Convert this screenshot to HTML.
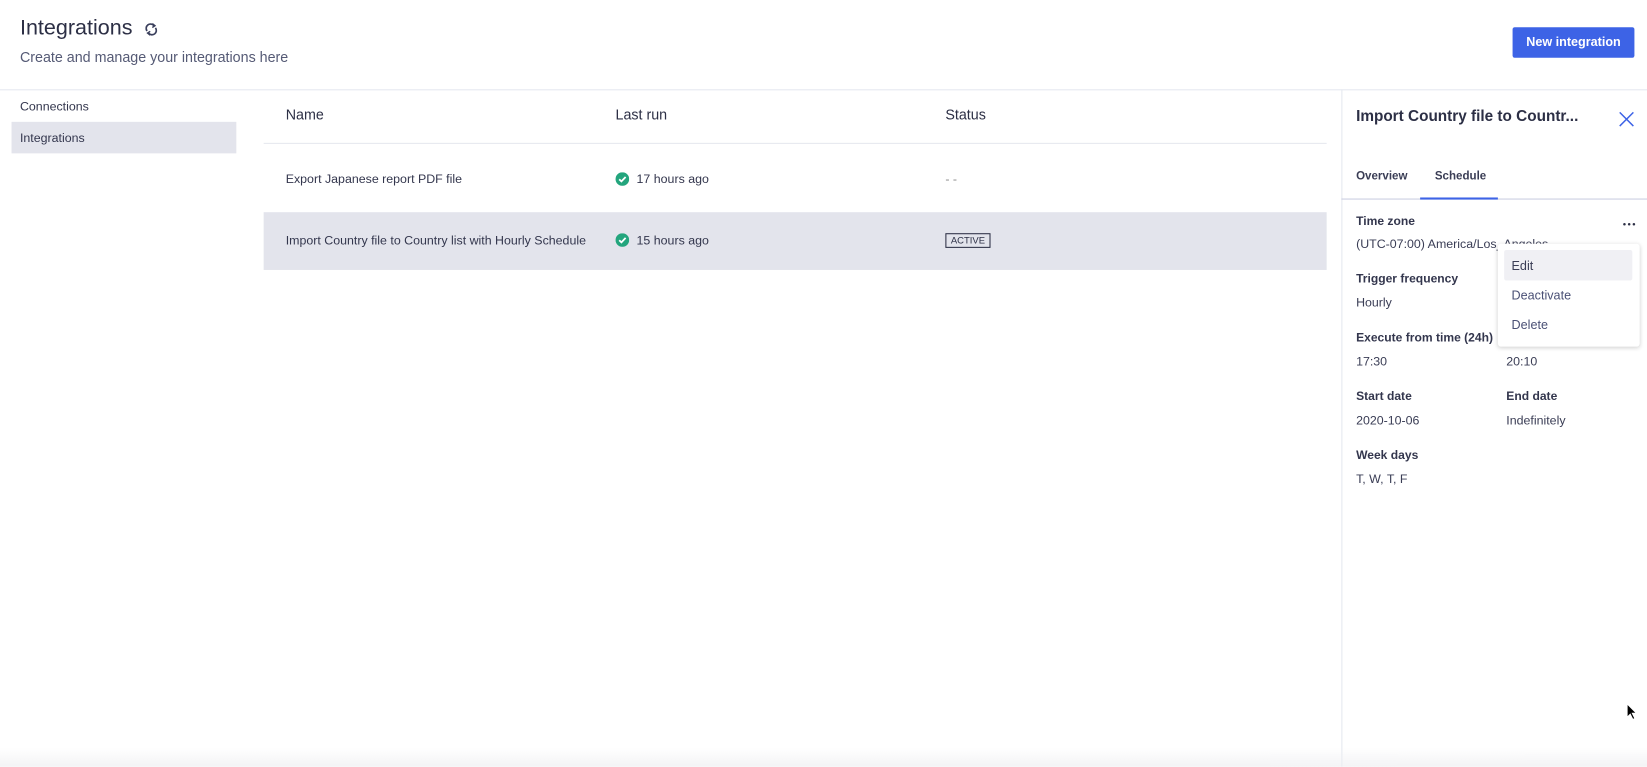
<!DOCTYPE html>
<html><head><meta charset="utf-8"><style>
*{margin:0;padding:0;box-sizing:border-box}
html,body{width:1647px;height:767px;overflow:hidden;background:#fff}
#w{position:absolute;left:0;top:0;width:1568px;height:730px;transform:scale(1.0504);transform-origin:0 0;font-family:"Liberation Sans",sans-serif;color:#2c2f45}
.a{position:absolute;white-space:nowrap}
.lab{font-size:11.5px;font-weight:bold;color:#33364d}
.val{font-size:11.8px;color:#3a3d55}
.t{font-size:11.8px;color:#33364d}
</style></head><body><div id="w">
<div class="a" style="left:19px;top:15px;font-size:20.5px;color:#2c2f45">Integrations</div>
<svg class="a" style="left:137px;top:21px" width="14" height="14" viewBox="0 0 14 14"><path d="M3 8.5A4 4 0 0 1 9.5 3.5M11 5.5A4 4 0 0 1 4.5 10.5" fill="none" stroke="#3a3f5c" stroke-width="1.6"/><path d="M8 1.5L10.5 3.5 8 5.2M6 8.8L3.5 10.5 6 12.5" fill="none" stroke="#3a3f5c" stroke-width="1.4"/></svg>
<div class="a" style="left:19px;top:47px;font-size:13.6px;color:#555a75">Create and manage your integrations here</div>
<div class="a" style="left:1440px;top:26px;width:116px;height:29px;background:#3d63e6;border-radius:2px;color:#fff;font-size:12px;font-weight:bold;text-align:center;line-height:29px">New integration</div>
<div class="a" style="left:0;top:85px;width:1568px;height:1px;background:#e5e8ef"></div>
<div class="a t" style="left:19px;top:94px">Connections</div>
<div class="a" style="left:11px;top:116px;width:214px;height:30px;background:#e3e4ec"></div>
<div class="a t" style="left:19px;top:124px">Integrations</div>
<div class="a" style="left:272px;top:102px;font-size:13.6px;color:#2c2f45">Name</div>
<div class="a" style="left:586px;top:102px;font-size:13.6px;color:#2c2f45">Last run</div>
<div class="a" style="left:900px;top:102px;font-size:13.6px;color:#2c2f45">Status</div>
<div class="a" style="left:251px;top:136px;width:1012px;height:1px;background:#e5e8ef"></div>
<div class="a t" style="left:272px;top:163px">Export Japanese report PDF file</div>
<svg class="a" style="left:586px;top:164px" width="13" height="13" viewBox="0 0 13 13"><circle cx="6.5" cy="6.5" r="6.5" fill="#23a57d"/><path d="M3.5 6.7L5.6 8.7 9.6 4.5" fill="none" stroke="#fff" stroke-width="1.7"/></svg>
<div class="a t" style="left:606px;top:163px">17 hours ago</div>
<div class="a t" style="left:900px;top:163px;color:#888">- -</div>
<div class="a" style="left:251px;top:202px;width:1012px;height:55px;background:#e3e4ec"></div>
<div class="a t" style="left:272px;top:222px">Import Country file to Country list with Hourly Schedule</div>
<svg class="a" style="left:586px;top:222px" width="13" height="13" viewBox="0 0 13 13"><circle cx="6.5" cy="6.5" r="6.5" fill="#23a57d"/><path d="M3.5 6.7L5.6 8.7 9.6 4.5" fill="none" stroke="#fff" stroke-width="1.7"/></svg>
<div class="a t" style="left:606px;top:222px">15 hours ago</div>
<div class="a" style="left:900px;top:222px;width:43px;height:14px;border:1px solid #2c2f45;font-size:9px;line-height:12px;text-align:center;color:#2c2f45">ACTIVE</div>
<div class="a" style="left:1277px;top:85px;width:1px;height:645px;background:#e5e8ef"></div>
<div class="a" style="left:1291px;top:103px;font-size:14.6px;font-weight:bold;color:#2c2f45">Import Country file to Countr...</div>
<svg class="a" style="left:1541px;top:106px" width="15" height="15" viewBox="0 0 15 15"><path d="M1 1L14 14M14 1L1 14" stroke="#3d63e6" stroke-width="1.4"/></svg>
<div class="a" style="left:1291px;top:162px;font-size:11px;font-weight:bold;color:#3a3d55">Overview</div>
<div class="a" style="left:1366px;top:162px;font-size:11px;font-weight:bold;color:#3a3d55">Schedule</div>
<div class="a" style="left:1277px;top:189px;width:291px;height:1px;background:#c9cde0"></div>
<div class="a" style="left:1352px;top:188px;width:74px;height:2px;background:#3d63e6"></div>
<div class="a lab" style="left:1291px;top:205px">Time zone</div>
<div class="a val" style="left:1291px;top:225px">(UTC-07:00) America/Los_Angeles</div>
<svg class="a" style="left:1545px;top:212px" width="12" height="3" viewBox="0 0 12 3"><circle cx="1.5" cy="1.5" r="1.2" fill="#2c2f45"/><circle cx="6" cy="1.5" r="1.2" fill="#2c2f45"/><circle cx="10.5" cy="1.5" r="1.2" fill="#2c2f45"/></svg>
<div class="a lab" style="left:1291px;top:260px">Trigger frequency</div>
<div class="a val" style="left:1291px;top:281px">Hourly</div>
<div class="a lab" style="left:1291px;top:316px">Execute from time (24h)</div>
<div class="a val" style="left:1291px;top:337px">17:30</div>
<div class="a val" style="left:1434px;top:337px">20:10</div>
<div class="a lab" style="left:1291px;top:372px">Start date</div>
<div class="a val" style="left:1291px;top:393px">2020-10-06</div>
<div class="a lab" style="left:1434px;top:372px">End date</div>
<div class="a val" style="left:1434px;top:393px">Indefinitely</div>
<div class="a lab" style="left:1291px;top:428px">Week days</div>
<div class="a val" style="left:1291px;top:449px">T, W, T, F</div>
<div class="a" style="left:1426px;top:232px;width:135px;height:98px;background:#fff;border-radius:3px;box-shadow:0 1px 4px rgba(0,0,0,.18)"></div>
<div class="a" style="left:1432px;top:238px;width:122px;height:29px;background:#f0f0f4;border-radius:2px"></div>
<div class="a" style="left:1439px;top:246px;font-size:12px;color:#3a3d55">Edit</div>
<div class="a" style="left:1439px;top:274px;font-size:12px;color:#4a5075">Deactivate</div>
<div class="a" style="left:1439px;top:302px;font-size:12px;color:#4a5075">Delete</div>
<svg class="a" style="left:1548px;top:669px" width="12" height="17" viewBox="0 0 12 17"><path d="M1 1L1 14 4 11 6.5 16 8.5 15 6 10 10 10Z" fill="#000" stroke="#fff" stroke-width="1"/></svg>
<div class="a" style="left:0;top:712px;width:1277px;height:18px;background:linear-gradient(rgba(255,255,255,0),#f3f3f5)"></div>
<div class="a" style="left:1278px;top:712px;width:290px;height:18px;background:linear-gradient(rgba(255,255,255,0),#f3f3f5)"></div>
</div></body></html>
